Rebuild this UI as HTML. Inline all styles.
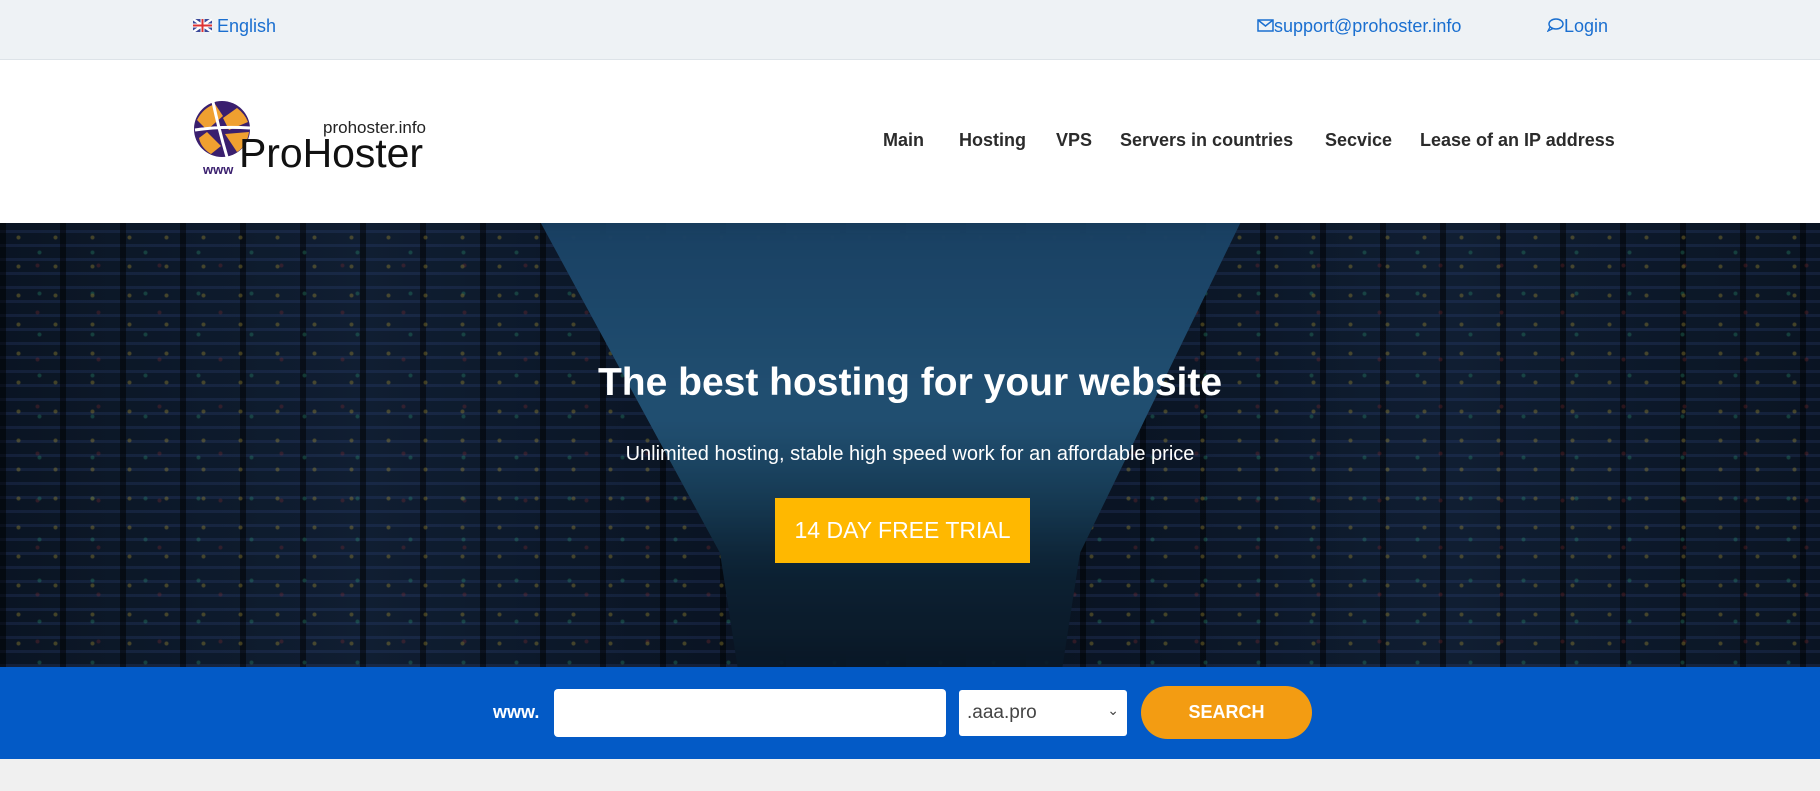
<!DOCTYPE html>
<html><head><meta charset="utf-8"><style>
*{margin:0;padding:0;box-sizing:border-box}
body{width:1820px;height:791px;overflow:hidden;font-family:"Liberation Sans",sans-serif;background:#f0f0f0;position:relative}
.top{position:absolute;left:0;top:0;width:1820px;height:60px;background:#eef2f5;border-bottom:1px solid #dde3e8;color:#1a6fd0;font-size:18px}
.top span{position:absolute;top:16px}
.hdr{position:absolute;top:60px;left:0;width:1820px;height:163px;background:#fff}
.nav{position:absolute;top:130px;font-size:18px;font-weight:bold;color:#2b2b2b}
.hero{position:absolute;top:223px;left:0;width:1820px;height:444px;overflow:hidden;background:#08121f}
.racks{position:absolute;inset:0;
background:
repeating-linear-gradient(90deg,rgba(0,0,0,.5) 0 6px,transparent 6px 60px),
repeating-linear-gradient(0deg,rgba(80,110,200,.18) 0 3px,transparent 3px 14px),
linear-gradient(90deg,#0d1a2c 0,#14263f 20%,#0e1c30 35%,#0a1525 50%,#0e1c30 65%,#14263f 80%,#0d1a2c 100%)}
.light{position:absolute;inset:-20px;clip-path:polygon(550px 0,1270px 0,1100px 350px,1080px 480px,760px 480px,740px 350px);
background:linear-gradient(180deg,#1f4f7a 0,#2a6590 45%,#1b4766 62%,#102a40 75%,#0c1c2e 100%);filter:blur(18px)}
.dots{position:absolute;inset:0;background:
radial-gradient(circle,rgba(220,190,60,.7) 1.5px,transparent 2.5px) 0 0/37px 29px,
radial-gradient(circle,rgba(60,200,150,.6) 1.5px,transparent 2.5px) 13px 9px/53px 41px,
radial-gradient(circle,rgba(200,60,60,.5) 1.5px,transparent 2.5px) 7px 19px/61px 47px;opacity:.5}
.dark{position:absolute;inset:0;background:rgba(0,0,0,.2)}
h1{position:absolute;top:138px;left:0;width:1820px;text-align:center;color:#fff;font-size:39px;font-weight:bold}
.sub{position:absolute;top:220px;left:0;width:1820px;text-align:center;color:#fff;font-size:20px}
.btn{position:absolute;left:775px;top:275px;width:255px;height:65px;background:#ffb800;color:#fff;font-size:23px;text-align:center;line-height:65px}
.bar{position:absolute;top:667px;left:0;width:1820px;height:92px;background:#035ac6}
</style></head><body>
<div class="top">
<span style="left:193px"><svg width="19" height="13" viewBox="0 0 19 13" style="vertical-align:0"><rect width="19" height="13" fill="#3a4a9a"/><path d="M0 0L19 13M19 0L0 13" stroke="#fff" stroke-width="2.5"/><path d="M9.5 0V13M0 6.5H19" stroke="#fff" stroke-width="4"/><path d="M9.5 0V13M0 6.5H19" stroke="#d33" stroke-width="2"/></svg> English</span>
<span style="left:1257px"><svg width="17" height="13" viewBox="0 0 17 13"><rect x="1" y="1" width="15" height="11" fill="none" stroke="#1a6fd0" stroke-width="1.5"/><path d="M1 1L8.5 7L16 1" fill="none" stroke="#1a6fd0" stroke-width="1.5"/></svg>support@prohoster.info</span>
<span style="left:1547px"><svg width="17" height="15" viewBox="0 0 17 15"><ellipse cx="9" cy="7" rx="7" ry="5" fill="none" stroke="#1a6fd0" stroke-width="1.5"/><path d="M3 10L1 14L6 11.5" fill="none" stroke="#1a6fd0" stroke-width="1.3"/></svg>Login</span>
</div>
<div class="hdr">
<svg style="position:absolute;left:193px;top:40px" width="240" height="80" viewBox="0 0 240 80">
<circle cx="29" cy="29" r="28" fill="#3a1f6e"/>
<path d="M4 20Q10 8 22 4L30 16L14 30Z" fill="#f0a030"/><path d="M6 38L14 32L28 46L18 54Q8 48 6 38Z" fill="#f0a030"/><path d="M30 18L44 8Q52 14 55 22L36 30Z" fill="#f0a030"/><path d="M32 34L56 32Q54 46 44 52Z" fill="#f0a030"/>
<path d="M2 30Q28 26 57 28M20 2Q26 30 34 57" stroke="#fff" stroke-width="3" fill="none"/>
<text x="10" y="74" font-size="13" font-weight="bold" fill="#3a1f6e" font-family="Liberation Sans">www</text>
<text x="130" y="33" font-size="17" fill="#222" font-family="Liberation Sans">prohoster.info</text>
<text x="46" y="67" font-size="41" fill="#111" font-family="Liberation Sans" textLength="184">ProHoster</text>
</svg>
<div class="nav" style="left:883px;top:70px">Main</div>
<div class="nav" style="left:959px;top:70px">Hosting</div>
<div class="nav" style="left:1056px;top:70px">VPS</div>
<div class="nav" style="left:1120px;top:70px">Servers in countries</div>
<div class="nav" style="left:1325px;top:70px">Secvice</div>
<div class="nav" style="left:1420px;top:70px">Lease of an IP address</div>
</div>
<div class="hero">
<div class="racks"></div><div class="dots"></div>
<div class="light"></div><div class="dark"></div>
<h1>The best hosting for your website</h1>
<div class="sub">Unlimited hosting, stable high speed work for an affordable price</div>
<div class="btn">14 DAY FREE TRIAL</div>
</div>
<div class="bar">
<div style="position:absolute;left:493px;top:35px;color:#fff;font-size:18px;font-weight:bold">www.</div>
<div style="position:absolute;left:554px;top:22px;width:392px;height:48px;background:#fff;border-radius:4px"></div>
<div style="position:absolute;left:959px;top:23px;width:168px;height:46px;background:#fff;border-radius:3px;color:#444;font-size:19px;padding:12px 8px">.aaa.pro<span style="position:absolute;right:8px;top:12px;font-size:14px">&#8964;</span></div>
<div style="position:absolute;left:1141px;top:19px;width:171px;height:53px;background:#f39c12;border-radius:27px;color:#fff;font-size:18px;font-weight:bold;text-align:center;line-height:53px">SEARCH</div>
</div>
</body></html>
